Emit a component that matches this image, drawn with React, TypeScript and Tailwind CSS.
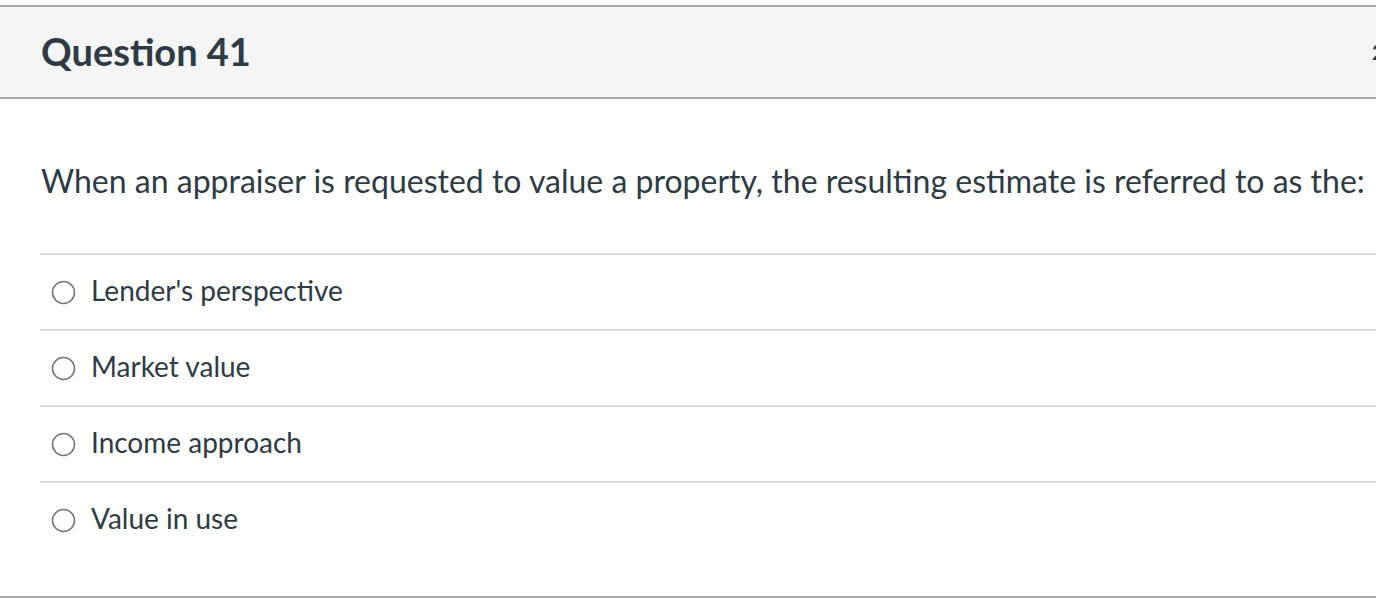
import React from "react";

const answers = ["Lender's perspective", "Market value", "Income approach", "Value in use"];

export default function App() {
  return (
    <div
      className="w-[1376px] h-[598px] overflow-hidden bg-white text-[#2d3b45]"
      style={{ fontFamily: "Lato, 'Noto Sans', sans-serif" }}
    >
      <div className="pt-[5px]">
        <div className="border-y-2 border-[#aaaaaa] bg-[#f5f5f5] h-[94px] flex items-center w-[1500px]">
          <div className="w-[1372px] pl-[41px] text-[38px] font-bold leading-none pb-[2px]">Question 41</div>
          <div className="text-[20px] font-bold text-[#2d3b45]">2 pts</div>
        </div>
        <div className="pl-[40px]">
          <div className="mt-[60px] pl-[1px] text-[32px] leading-[44px] whitespace-nowrap">
            When an appraiser is requested to value a property, the resulting estimate is referred to as the:
          </div>
          <div className="mt-[50px]">
            {answers.map((a) => (
              <div key={a} className="border-t-2 border-[#dddddd] h-[76px] flex items-center">
                <svg width="25" height="25" viewBox="0 0 25 25" className="ml-[11px] shrink-0">
                  <circle cx="12.5" cy="12.5" r="11" fill="white" stroke="#777777" strokeWidth="1.6" />
                </svg>
                <span className="ml-[15px] text-[28px] leading-none pb-[4px]">{a}</span>
              </div>
            ))}
          </div>
        </div>
        <div className="mt-[39px] border-t-2 border-[#aaaaaa]" />
      </div>
    </div>
  );
}
